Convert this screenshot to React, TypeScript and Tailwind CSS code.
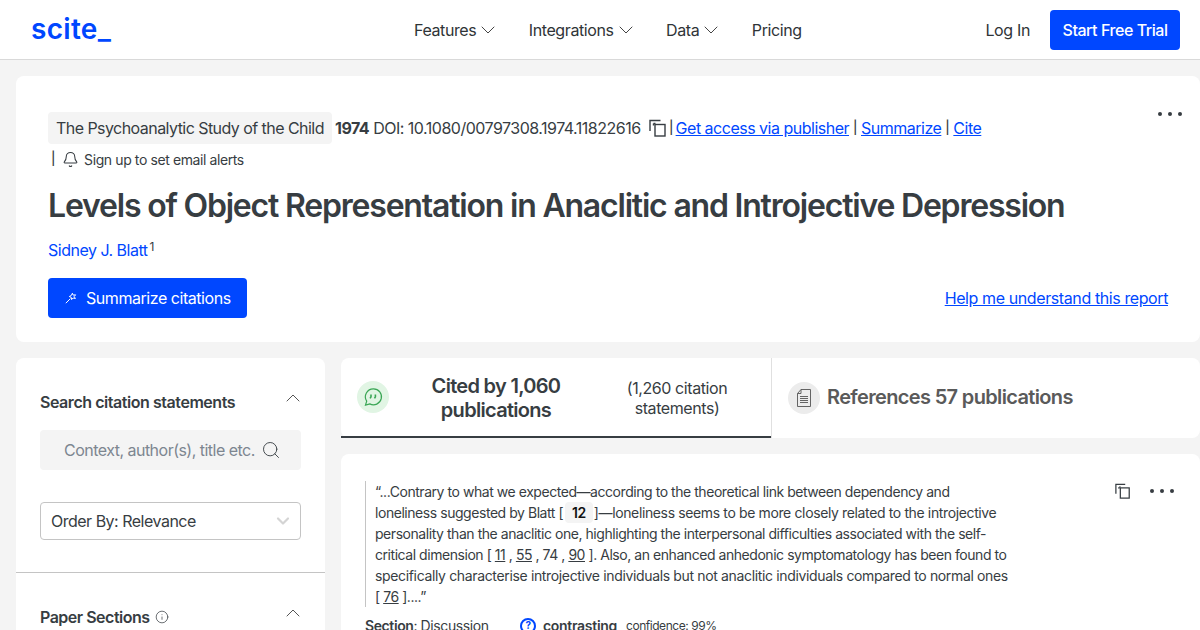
import { ChevronDown, ChevronUp, Search, Info, Bell } from 'lucide-react'

const font = { fontFamily: 'Inter, sans-serif' }

function NavItem({ label, caret }: { label: string; caret?: boolean }) {
  return (
    <a className="flex items-center h-[24px] text-[16px] text-[#2f3437] tracking-[-0.4px]">
      {label}
      {caret && <ChevronDown size={24} strokeWidth={1} className="text-[#444]" />}
    </a>
  )
}

function CopyIcon({ size = 18 }: { size?: number }) {
  return (
    <svg width={size} height={size} viewBox="0 0 18 18" fill="none" stroke="#373d42" strokeWidth="1.4">
      <path d="M1 12V1.5h10.5" />
      <path d="M4.5 4.5h2M4.5 4.5v2" />
      <rect x="6" y="5.5" width="10" height="11.5" />
    </svg>
  )
}

function Dots() {
  return (
    <div className="flex gap-[6px]">
      <span className="w-[4px] h-[4px] rounded-full bg-[#373d42]" />
      <span className="w-[4px] h-[4px] rounded-full bg-[#373d42]" />
      <span className="w-[4px] h-[4px] rounded-full bg-[#373d42]" />
    </div>
  )
}

function Sep() {
  return <span className="text-[13px] font-medium w-[12px] text-center">|</span>
}

export default function App() {
  return (
    <div style={font} className="h-[630px] w-[1200px] overflow-hidden bg-[#f4f4f4] text-[#373d42]">
      {/* Header */}
      <header className="h-[60px] bg-white border-b border-[#d9d9d9] flex items-center pl-[31px] pr-[20px]">
        <div className="w-[383px] text-[#0047ff] text-[28px] font-semibold leading-none tracking-[0.3px] -mt-[2px]">scite_</div>
        <nav className="flex items-center gap-[28.5px]">
          <NavItem label="Features" caret />
          <NavItem label="Integrations" caret />
          <NavItem label="Data" caret />
          <NavItem label="Pricing" />
        </nav>
        <div className="ml-auto flex items-center gap-[20px]">
          <a className="text-[16px] text-[#2f3437] tracking-[-0.35px]">Log In</a>
          <button className="w-[130px] h-[40px] rounded-[4px] bg-[#0047ff] text-white text-[16px] font-medium tracking-[-0.45px]">Start Free Trial</button>
        </div>
      </header>

      <main className="p-[16px] pr-0 flex flex-col gap-[16px]">
        {/* Paper card */}
        <section className="relative h-[266px] bg-white rounded-[8px] pl-[32px] pr-[32px] pt-[36px]">
          <div className="flex items-center text-[16px] tracking-[-0.5px] h-[32px] whitespace-nowrap">
            <span className="h-[32px] w-[284px] px-[8px] flex items-center rounded-[4px] bg-[#f4f4f4] mr-[3px] tracking-[-0.55px]">The Psychoanalytic Study of the Child</span>
            <b className="font-bold mr-[4px]">1974</b>
            <span>DOI: 10.1080/00797308.1974.11822616</span>
            <span className="ml-[8px]"><CopyIcon /></span>
            <span className="text-[13px] font-medium w-[9px] text-center">|</span>
            <a className="text-[#0047ff] underline">Get access via publisher</a>
            <Sep />
            <a className="text-[#0047ff] underline">Summarize</a>
            <Sep />
            <a className="text-[#0047ff] underline">Cite</a>
          </div>
          <div className="flex items-center h-[20px] mt-[5px] text-[14px] tracking-[-0.4px]">
            <span className="text-[13px] font-medium mr-[7px] ml-[3px]">|</span>
            <Bell size={17} strokeWidth={1.5} className="mr-[5px]" />
            Sign up to set email alerts
          </div>
          <h1 className="mt-[17px] text-[32px] leading-[40px] font-semibold tracking-[-1.2px] whitespace-nowrap">Levels of Object Representation in Anaclitic and Introjective Depression</h1>
          <div className="mt-[11px] h-[24px] flex text-[16px] tracking-[-0.5px]">
            <a className="text-[#0047ff] leading-[26px]">Sidney J. Blatt</a>
            <sup className="text-[12px] leading-[16px] top-0 ml-[2px] mt-[2px]">1</sup>
          </div>
          <div className="mt-[17px] flex items-center justify-between">
            <button className="w-[199px] h-[40px] rounded-[4px] bg-[#0047ff] text-white text-[16px] tracking-[-0.45px] flex items-center pl-[17px] gap-[9px]">
              <svg width="12" height="12" viewBox="0 0 12 12" fill="none" stroke="#fff" strokeWidth="1">
                <path d="M0.8 11.2 5.4 6.6" />
                <path d="M7.4 1.2l.7 1.9 2.5-.3-1.4 1.8 1.2 1.9-2.3-.5-1.5 1.6-.3-2.2-2-.9 2-1z" />
              </svg>
              Summarize citations
            </button>
            <a className="text-[#0047ff] underline text-[16px] tracking-[-0.4px]">Help me understand this report</a>
          </div>
          <div className="absolute right-[18px] top-[36px]"><Dots /></div>
        </section>

        <div className="flex gap-[16px] items-start">
          {/* Sidebar */}
          <aside className="w-[309px] h-[400px] shrink-0 bg-white rounded-[8px]">
            <div className="px-[24px] pt-[32px] pb-[32px] border-b border-[#c4c4c4]">
              <div className="flex items-start justify-between h-[24px]">
                <h2 className="text-[16px] leading-[24px] font-semibold tracking-[-0.45px]">Search citation statements</h2>
                <ChevronUp size={24} strokeWidth={1} className="-mt-[4px] -mr-[4px] text-[#555]" />
              </div>
              <div className="mt-[16px] h-[40px] rounded-[4px] bg-[#f4f4f4] flex items-center pl-[24px] pr-[20px] justify-between text-[16px] text-[#7d8690] tracking-[-0.52px] whitespace-nowrap">
                Context, author(s), title etc.
                <Search size={20} strokeWidth={1.1} className="text-[#373d42]" />
              </div>
              <div className="mt-[32px] h-[38px] rounded-[4px] border border-[#c4c4c4] flex items-center justify-between pl-[10px] pr-[7px] text-[16px] tracking-[-0.5px]">
                Order By: Relevance
                <ChevronDown size={20} strokeWidth={2.6} className="text-[#d4d4d4]" />
              </div>
            </div>
            <div className="px-[24px] pt-[32px]">
              <div className="flex items-start justify-between">
                <h2 className="flex items-center gap-[5px] text-[16px] leading-[24px] font-semibold tracking-[-0.5px]">
                  Paper Sections <Info size={14} strokeWidth={1.25} />
                </h2>
                <ChevronUp size={24} strokeWidth={1} className="-mt-[4px] -mr-[4px] text-[#555]" />
              </div>
            </div>
          </aside>

          {/* Citations */}
          <div className="flex-1 flex flex-col gap-[16px] min-w-0">
            <div className="h-[80px] bg-white rounded-[8px] flex">
              <div className="w-[430px] h-[80px] border-b-2 border-[#373d42] flex items-center pl-[16px] rounded-tl-[8px]">
                <div className="w-[32px] h-[32px] rounded-full bg-[#e1f5e4] flex items-center justify-center shrink-0">
                  <svg width="20" height="20" viewBox="0 0 20 20" fill="none" stroke="#3aa655" strokeWidth="1.2">
                    <path d="M10.5 1.8a8 8 0 1 1-3.7 15.1l-4.3 1.2 1.2-3.9A8 8 0 0 1 10.5 1.8z" />
                    <path d="M8 7.6v2.2l-.9 1.6M12.4 7.6v2.2l-.9 1.6" strokeWidth="1.6" />
                  </svg>
                </div>
                <div className="w-[214px] mt-[1px] text-center text-[20px] leading-[24px] font-semibold tracking-[-0.7px]">Cited by 1,060 publications</div>
                <div className="w-[120px] ml-[14px] mt-[2px] text-center text-[16px] leading-[20px] tracking-[-0.42px]">(1,260 citation statements)</div>
              </div>
              <div className="flex-1 flex items-center pl-[16px] border-l border-[#e0e0e0] text-[#5a5a5a]">
                <div className="w-[32px] h-[32px] rounded-full bg-[#ececec] flex items-center justify-center">
                  <svg width="18" height="20" viewBox="0 0 18 20" fill="none" stroke="#555" strokeWidth="0.9">
                    <path d="M6 1.5h9.5v17h-13V5.5z" />
                    <path d="M6 1.5v4H2.5M5 8.5h8M5 10.5h8M5 12.5h8M5 14.5h8" />
                  </svg>
                </div>
                <span className="ml-[7px] -mt-[2px] text-[20px] font-semibold tracking-[-0.65px]">References 57 publications</span>
              </div>
            </div>

            <article className="relative h-[300px] bg-white rounded-[8px] pl-[24px] pt-[27px]">
              <div className="absolute right-[26px] top-[29px] flex items-center gap-[19px]">
                <CopyIcon size={16} />
                <Dots />
              </div>
              <blockquote className="w-[646px] border-l border-[#c4c4c4] pl-[9px] text-[14px] leading-[21px] tracking-[-0.45px]">
                “...Contrary to what we expected—according to the theoretical link between dependency and loneliness suggested by Blatt [<b className="font-semibold text-[#111] bg-[#f4f4f4] rounded-[4px] px-[7px] ml-[2px] mr-[1px] py-[2px]">12</b>]<span className="tracking-[-0.37px]">—loneliness seems to be more closely related to the introjective</span> personality than the anaclitic one, highlighting the interpersonal difficulties associated with the self-critical dimension [ <u>11</u> , <u>55</u> , 74 , <u>90</u> ]. Also, an enhanced anhedonic symptomatology has been found to <span className="tracking-[-0.35px]">specifically characterise introjective individuals but not anaclitic individuals compared to normal ones</span> <span className="whitespace-nowrap">[ <u>76</u> ]....”</span>
              </blockquote>
              <div className="mt-[8px] flex items-center text-[14px] tracking-[-0.4px]">
                <span className="w-[155px]"><b className="font-semibold">Section</b>: Discussion</span>
                <span className="w-[16px] h-[16px] mr-[7px] rounded-full border-2 border-[#0047ff] text-[#0047ff] text-[10px] font-bold flex items-center justify-center">?</span>
                <b className="font-semibold mr-[9px] tracking-[-0.3px]">contrasting</b>
                <span className="text-[12px] tracking-[-0.45px]">confidence: 99%</span>
              </div>
            </article>
          </div>
        </div>
      </main>
    </div>
  )
}
